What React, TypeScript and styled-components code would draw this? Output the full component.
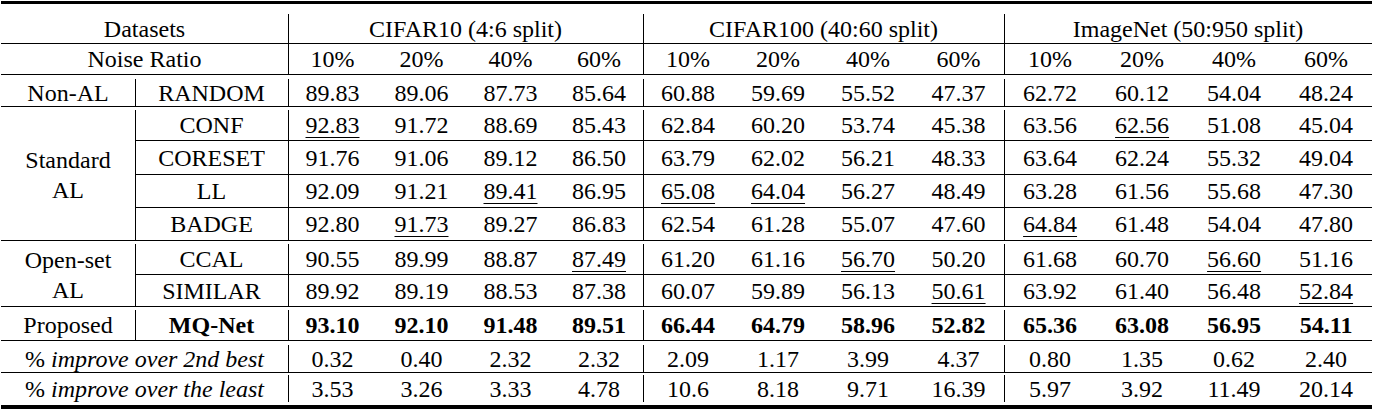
import React from "react";
import styled, { createGlobalStyle } from "styled-components";

const Global = createGlobalStyle`
  html, body { margin: 0; padding: 0; background: #fff; font-family: "Liberation Serif", "DejaVu Serif", serif; }
`;

const Table = styled.table`
  border-collapse: separate;
  border-spacing: 0;
  table-layout: fixed;
  width: 1371px;
  margin: 1px 0 0 1px;
  border-top: 3px solid #000;
  border-bottom: 4px solid #000;
  font-family: "Liberation Serif", "DejaVu Serif", serif;
  font-size: 24px;
  color: #000;
`;

const Col = styled.col<{ $w: number }>`
  width: ${(p) => p.$w}px;
`;

const Row = styled.tr<{ $h: number }>`
  height: ${(p) => p.$h}px;
`;

const Cell = styled.td<{
  $line?: boolean;
  $vl?: boolean;
  $gt?: number;
  $gb?: number;
  $lh?: number;
}>`
  box-sizing: border-box;
  padding: ${(p) => p.$gt ?? 0}px 0 ${(p) => p.$gb ?? 0}px 0;
  font-family: "Liberation Serif", "DejaVu Serif", serif;
  font-size: 24px;
  text-align: center;
  vertical-align: middle;
  white-space: nowrap;
  line-height: ${(p) => p.$lh ?? 26}px;
  border-top: ${(p) => (p.$line ? "1px solid #000" : "none")};
  background-image: ${(p) => (p.$vl ? "linear-gradient(#000, #000)" : "none")};
  background-repeat: no-repeat;
  background-position: left 0 top ${(p) => p.$gt ?? 0}px;
  background-size: 1px calc(100% - ${(p) => (p.$gt ?? 0) + (p.$gb ?? 0)}px);
`;

const Num = styled.span<{ $u?: boolean; $b?: boolean }>`
  font-weight: ${(p) => (p.$b ? 700 : 400)};
  text-decoration: ${(p) => (p.$u ? "underline" : "none")};
  text-decoration-thickness: 1px;
  text-underline-offset: 4px;
`;

const Em = styled.span`
  font-style: italic;
`;

const Bold = styled.span`
  font-weight: 700;
`;

const widths = [134, 153, 89, 89, 89, 88, 90, 90, 90, 91, 92, 92, 92, 92];

const groups = ["CIFAR10 (4:6 split)", "CIFAR100 (40:60 split)", "ImageNet (50:950 split)"];
const ratios = ["10%", "20%", "40%", "60%"];

type Method = {
  cat?: { text: string[]; span: number };
  name: string;
  vals: string[];
  h: number;
  gt: number;
  bold?: boolean;
};

const methods: Method[] = [
  {
    cat: { text: ["Non-AL"], span: 1 },
    name: "RANDOM",
    vals: "89.83 89.06 87.73 85.64 60.88 59.69 55.52 47.37 62.72 60.12 54.04 48.24".split(" "),
    h: 32,
    gt: 4,
  },
  {
    cat: { text: ["Standard", "AL"], span: 4 },
    name: "CONF",
    vals: "_92.83 91.72 88.69 85.43 62.84 60.20 53.74 45.38 63.56 _62.56 51.08 45.04".split(" "),
    h: 34,
    gt: 3,
  },
  {
    name: "CORESET",
    vals: "91.76 91.06 89.12 86.50 63.79 62.02 56.21 48.33 63.64 62.24 55.32 49.04".split(" "),
    h: 34,
    gt: 0,
  },
  {
    name: "LL",
    vals: "92.09 91.21 _89.41 86.95 _65.08 _64.04 56.27 48.49 63.28 61.56 55.68 47.30".split(" "),
    h: 33,
    gt: 0,
  },
  {
    name: "BADGE",
    vals: "92.80 _91.73 89.27 86.83 62.54 61.28 55.07 47.60 _64.84 61.48 54.04 47.80".split(" "),
    h: 33,
    gt: 0,
  },
  {
    cat: { text: ["Open-set", "AL"], span: 2 },
    name: "CCAL",
    vals: "90.55 89.99 88.87 _87.49 61.20 61.16 _56.70 50.20 61.68 60.70 _56.60 51.16".split(" "),
    h: 34,
    gt: 3,
  },
  {
    name: "SIMILAR",
    vals: "89.92 89.19 88.53 87.38 60.07 59.89 56.13 _50.61 63.92 61.40 56.48 _52.84".split(" "),
    h: 32,
    gt: 0,
  },
  {
    cat: { text: ["Proposed"], span: 1 },
    name: "MQ-Net",
    vals: "93.10 92.10 91.48 89.51 66.44 64.79 58.96 52.82 65.36 63.08 56.95 54.11".split(" "),
    h: 34,
    gt: 3,
    bold: true,
  },
];

const improvements = [
  {
    label: "improve over 2nd best",
    vals: "0.32 0.40 2.32 2.32 2.09 1.17 3.99 4.37 0.80 1.35 0.62 2.40".split(" "),
    h: 32,
    gt: 4,
    gb: 0,
  },
  {
    label: "improve over the least",
    vals: "3.53 3.26 3.33 4.78 10.6 8.18 9.71 16.39 5.97 3.92 11.49 20.14".split(" "),
    h: 33,
    gt: 2,
    gb: 3,
  },
];

function Values({
  vals,
  bold,
  gt,
  gb,
}: {
  vals: string[];
  bold?: boolean;
  gt: number;
  gb?: number;
}) {
  return (
    <>
      {vals.map((v, i) => {
        const u = v.startsWith("_");
        return (
          <Cell key={i} $line $vl={i % 4 === 0} $gt={gt} $gb={gb}>
            <Num $u={u} $b={bold}>
              {u ? v.slice(1) : v}
            </Num>
          </Cell>
        );
      })}
    </>
  );
}

export default function App() {
  return (
    <>
      <Global />
      <Table>
        <colgroup>
          {widths.map((w, i) => (
            <Col key={i} $w={w} />
          ))}
        </colgroup>
        <tbody>
          <Row $h={39}>
            <Cell colSpan={2} $gt={10}>
              Datasets
            </Cell>
            {groups.map((g) => (
              <Cell key={g} colSpan={4} $vl $gt={10}>
                {g}
              </Cell>
            ))}
          </Row>
          <Row $h={31}>
            <Cell colSpan={2} $line>
              Noise Ratio
            </Cell>
            {groups.map((g) =>
              ratios.map((r, i) => (
                <Cell key={g + r} $line $vl={i === 0}>
                  {r}
                </Cell>
              ))
            )}
          </Row>
          {methods.map((m) => (
            <Row key={m.name} $h={m.h}>
              {m.cat && (
                <Cell
                  rowSpan={m.cat.span}
                  $line
                  $gt={m.gt}
                  $lh={m.cat.text.length > 1 ? 30 : 26}
                >
                  {m.cat.text.map((t, i) => (
                    <React.Fragment key={t}>
                      {i > 0 && <br />}
                      {t}
                    </React.Fragment>
                  ))}
                </Cell>
              )}
              <Cell $line $vl $gt={m.gt}>
                {m.bold ? <Bold>{m.name}</Bold> : m.name}
              </Cell>
              <Values vals={m.vals} bold={m.bold} gt={m.gt} />
            </Row>
          ))}
          {improvements.map((r) => (
            <Row key={r.label} $h={r.h}>
              <Cell colSpan={2} $line $gt={r.gt} $gb={r.gb}>
                % <Em>{r.label}</Em>
              </Cell>
              <Values vals={r.vals} gt={r.gt} gb={r.gb} />
            </Row>
          ))}
        </tbody>
      </Table>
    </>
  );
}
